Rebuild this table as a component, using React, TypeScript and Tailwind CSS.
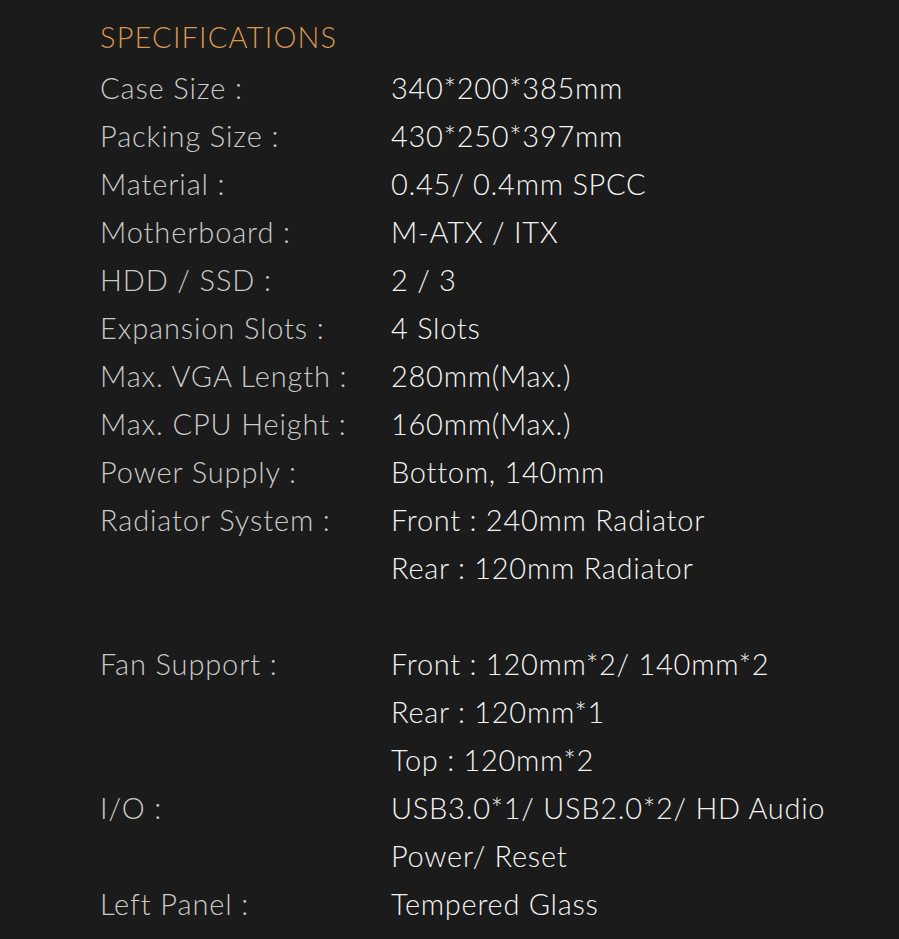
import React from 'react';

type Spec = { label: string; values: string[] };

const specs: Spec[] = [
  { label: 'Case Size :', values: ['340*200*385mm'] },
  { label: 'Packing Size :', values: ['430*250*397mm'] },
  { label: 'Material :', values: ['0.45/ 0.4mm SPCC'] },
  { label: 'Motherboard :', values: ['M-ATX / ITX'] },
  { label: 'HDD / SSD :', values: ['2 / 3'] },
  { label: 'Expansion Slots :', values: ['4 Slots'] },
  { label: 'Max. VGA Length :', values: ['280mm(Max.)'] },
  { label: 'Max. CPU Height :', values: ['160mm(Max.)'] },
  { label: 'Power Supply :', values: ['Bottom, 140mm'] },
  { label: 'Radiator System :', values: ['Front : 240mm Radiator', 'Rear : 120mm Radiator', '\u00a0'] },
  { label: 'Fan Support :', values: ['Front : 120mm*2/ 140mm*2', 'Rear : 120mm*1', 'Top : 120mm*2'] },
  { label: 'I/O :', values: ['USB3.0*1/ USB2.0*2/ HD Audio', 'Power/ Reset'] },
  { label: 'Left Panel :', values: ['Tempered Glass'] },
];

const App: React.FC = () => {
  return (
    <div className="min-h-screen bg-[#1b1b1b] pl-[100px] pt-[13px] font-['Lato','Open_Sans',sans-serif] text-[29px] font-light tracking-[0.03em]">
      <h2 className="mb-[3px] text-[29px] leading-[48px] font-light tracking-[0.04em] text-[#da9550]">
        SPECIFICATIONS
      </h2>
      <div className="grid grid-cols-[291px_1fr] leading-[48px]">
        {specs.map((spec) => (
          <React.Fragment key={spec.label}>
            <div className="text-[#cacaca]">{spec.label}</div>
            <div className="text-[#f4f4f4] tracking-[0.025em]">
              {spec.values.map((v, i) => (
                <div key={i}>{v}</div>
              ))}
            </div>
          </React.Fragment>
        ))}
      </div>
    </div>
  );
};

export default App;
